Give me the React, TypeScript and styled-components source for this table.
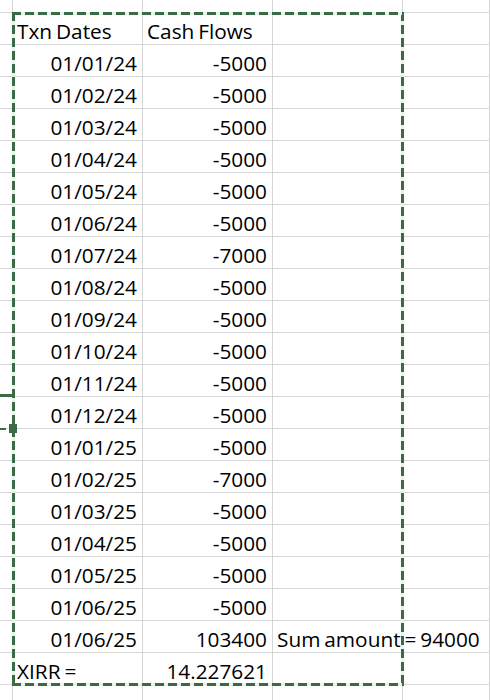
import React from "react";
import styled, { createGlobalStyle } from "styled-components";

const Global = createGlobalStyle`
  html, body { margin: 0; padding: 0; background: #ffffff; }
  body { width: 490px; height: 700px; overflow: hidden; }
`;

const GRID = "#d6d6d6";
const GREEN = "#3a6b45";

const Sheet = styled.div`
  position: relative;
  width: 490px;
  height: 700px;
  overflow: hidden;
  display: grid;
  grid-template-columns: 13px 130px 130px 130px 1fr;
  grid-template-rows: 13px;
  grid-auto-rows: 32px;
  font-family: "Open Sans", "Liberation Sans", sans-serif;
  font-size: 20.8px;
  color: #000;
  background: #fff;
`;

const Cell = styled.div<{ $align?: "left" | "right" }>`
  box-sizing: border-box;
  border-right: 1px solid ${GRID};
  border-bottom: 1px solid ${GRID};
  display: flex;
  align-items: flex-end;
  justify-content: ${(p) => (p.$align === "right" ? "flex-end" : "flex-start")};
  padding: 0 5px 2px 4px;
  white-space: nowrap;
  word-spacing: -1.5px;
  overflow: visible;
  line-height: 22px;
  position: relative;
  z-index: ${(p) => (p.$align === "left" ? 1 : 0)};
`;

const Marquee = styled.div`
  position: absolute;
  left: 12px;
  top: 12px;
  width: 392px;
  height: 674px;
  pointer-events: none;
  z-index: 2;
  background-image:
    repeating-linear-gradient(90deg, ${GREEN} 0 9px, #e9f1eb 9px 13px),
    repeating-linear-gradient(90deg, ${GREEN} 0 9px, #e9f1eb 9px 13px),
    repeating-linear-gradient(180deg, ${GREEN} 0 9px, #e9f1eb 9px 13px),
    repeating-linear-gradient(180deg, ${GREEN} 0 9px, #e9f1eb 9px 13px);
  background-size: 100% 3px, 100% 3px, 3px 100%, 3px 100%;
  background-position: 0 0, 0 100%, 0 0, 100% 0;
  background-repeat: no-repeat;
`;

/* selection marker of the neighbouring column, lying over the grid */
const RowMarker = styled.div`
  position: absolute;
  left: 0;
  top: 394px;
  width: 17px;
  height: 39px;
  pointer-events: none;
  z-index: 3;
  &::before {
    content: "";
    position: absolute;
    left: 0;
    top: 0;
    width: 14px;
    height: 3px;
    background: ${GREEN};
  }
  &::after {
    content: "";
    position: absolute;
    left: 0;
    top: 30px;
    width: 17px;
    height: 9px;
    background-image:
      linear-gradient(${GREEN}, ${GREEN}),
      linear-gradient(${GREEN}, ${GREEN});
    background-size: 8px 9px, 6px 2px;
    background-position: 9px 0, 0 4px;
    background-repeat: no-repeat;
  }
`;

type Align = "left" | "right";

const dates = [
  "01/01/24", "01/02/24", "01/03/24", "01/04/24", "01/05/24", "01/06/24",
  "01/07/24", "01/08/24", "01/09/24", "01/10/24", "01/11/24", "01/12/24",
  "01/01/25", "01/02/25", "01/03/25", "01/04/25", "01/05/25", "01/06/25",
];
const flows = [
  "-5000", "-5000", "-5000", "-5000", "-5000", "-5000",
  "-7000", "-5000", "-5000", "-5000", "-5000", "-5000",
  "-5000", "-7000", "-5000", "-5000", "-5000", "-5000",
];

export default function App() {
  const rows: { text: string; align: Align }[][] = [];
  rows.push([
    { text: "Txn Dates", align: "left" },
    { text: "Cash Flows", align: "left" },
    { text: "", align: "right" },
  ]);
  dates.forEach((d, i) =>
    rows.push([
      { text: d, align: "right" },
      { text: flows[i], align: "right" },
      { text: "", align: "right" },
    ])
  );
  rows.push([
    { text: "01/06/25", align: "right" },
    { text: "103400", align: "right" },
    { text: "Sum amount = 94000", align: "left" },
  ]);
  rows.push([
    { text: "XIRR =", align: "left" },
    { text: "14.227621", align: "right" },
    { text: "", align: "right" },
  ]);

  return (
    <>
      <Global />
      <Sheet>
        {[0, 1, 2, 3, 4].map((c) => (
          <Cell key={`h${c}`} />
        ))}
        {rows.map((r, ri) => (
          <React.Fragment key={ri}>
            <Cell />
            {r.map((c, ci) => (
              <Cell key={ci} $align={c.align}>
                {c.text}
              </Cell>
            ))}
            <Cell />
          </React.Fragment>
        ))}
        {[0, 1, 2, 3, 4].map((c) => (
          <Cell key={`f${c}`} />
        ))}
        <Marquee />
        <RowMarker />
      </Sheet>
    </>
  );
}
